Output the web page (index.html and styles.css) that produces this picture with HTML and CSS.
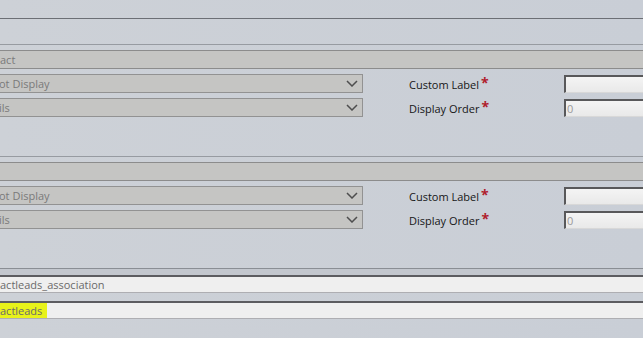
FILE: index.html
```html
<!DOCTYPE html>
<html lang="en">

<head>
    <meta charset="UTF-8">
    <meta name="viewport" content="width=device-width, initial-scale=1.0">
    <title>Field Mapping</title>

    <link rel="stylesheet" href="styles.css">
</head>

<body>
    <div class="top"></div>

    <div class="mapping">
        <div class="band">act</div>
        <div class="row">
            <div class="select">
                <span>ot Display</span>
                <svg class="chevron" width="12" height="7" viewBox="0 0 12 7"><path d="M1 1 L6 6 L11 1" /></svg>
            </div>
            <label class="label">Custom Label<span class="req">*</span></label>
            <div class="input"></div>
        </div>
        <div class="row">
            <div class="select">
                <span>ils</span>
                <svg class="chevron" width="12" height="7" viewBox="0 0 12 7"><path d="M1 1 L6 6 L11 1" /></svg>
            </div>
            <label class="label">Display Order<span class="req">*</span></label>
            <div class="input">0</div>
        </div>
    </div>

    <div class="mapping">
        <div class="band"></div>
        <div class="row">
            <div class="select">
                <span>ot Display</span>
                <svg class="chevron" width="12" height="7" viewBox="0 0 12 7"><path d="M1 1 L6 6 L11 1" /></svg>
            </div>
            <label class="label">Custom Label<span class="req">*</span></label>
            <div class="input"></div>
        </div>
        <div class="row">
            <div class="select">
                <span>ils</span>
                <svg class="chevron" width="12" height="7" viewBox="0 0 12 7"><path d="M1 1 L6 6 L11 1" /></svg>
            </div>
            <label class="label">Display Order<span class="req">*</span></label>
            <div class="input">0</div>
        </div>
    </div>

    <div class="names">
        <div class="field">actleads_association</div>
        <div class="field"><mark class="hl">actleads</mark></div>
    </div>
</body>

</html>
```

FILE: styles.css
```css
body {
    margin: 0;
    background: linear-gradient(90deg, #cdd1d7, #c9ced6);
    font-family: "Open Sans", "Noto Sans", sans-serif;
    font-size: 11px;
    overflow: hidden;
}

.top {
    height: 18px;
    border-bottom: 1px solid #6c6f75;
    margin-bottom: 25px;
}

/* one mapping block */
.mapping {
    height: 112px;
    border-top: 1px solid #979ba1;
    padding-top: 5px;
    box-sizing: border-box;
}

.band {
    height: 17px;
    line-height: 17px;
    background: #c5c5c3;
    border-top: 1px solid #8c8c8c;
    border-bottom: 1px solid #8c8c8c;
    color: #7a7a7a;
    margin-bottom: 5px;
}

.row {
    display: flex;
    align-items: center;
    height: 19px;
    margin-bottom: 5px;
}

.select {
    width: 362px;
    height: 17px;
    background: #c5c5c3;
    border: 1px solid #929292;
    border-left: 0;
    display: flex;
    align-items: center;
    justify-content: space-between;
    color: #7a7a7a;
    text-indent: -1px;
}

.chevron {
    margin-right: 4px;
}

.chevron path {
    fill: none;
    stroke: #4e4e4e;
    stroke-width: 1.5;
}

.label {
    margin-left: 46px;
    width: 155px;
    color: #161616;
    padding-top: 1px;
}

.req {
    color: #b0202c;
    margin-left: 2px;
    font-size: 14px;
    font-weight: bold;
    vertical-align: top;
    line-height: 11px;
}

.input {
    flex: 1;
    height: 15px;
    line-height: 15px;
    background: linear-gradient(#f4f4f4, #e9e9e9);
    border-top: 2px solid #58585a;
    border-left: 2px solid #58585a;
    border-bottom: 1px solid #d8d8d8;
    color: #9a9a9a;
    padding-left: 1px;
}

.names {
    border-top: 1px solid #8a8e94;
    padding-top: 6px;
    background: linear-gradient(#c3c7ce 7px, transparent 7px);
}

.field {
    height: 15px;
    line-height: 15px;
    background: #efefef;
    border-top: 2px solid #5c5c60;
    border-bottom: 1px solid #aeaeb2;
    color: #6a6a6a;
    margin-bottom: 8px;
}

.hl {
    display: inline-block;
    height: 15px;
    background: #e8f21a;
    color: #6a6a6a;
    padding-right: 5px;
}
```
